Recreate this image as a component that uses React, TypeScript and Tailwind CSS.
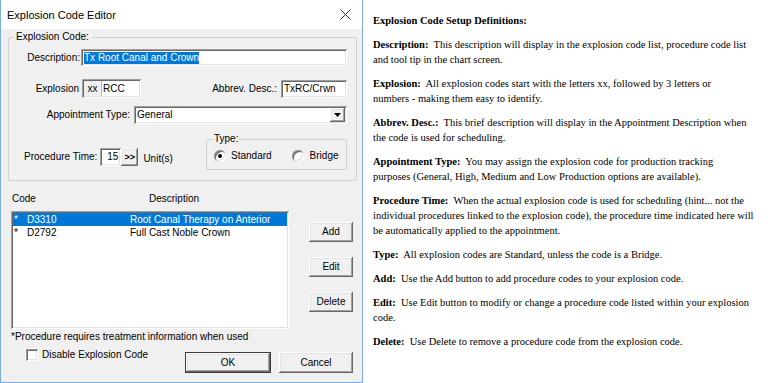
import { ReactNode } from 'react';

// classic win32 3D edges
const raised =
  'bg-[#f0f0f0] shadow-[inset_-1px_-1px_0_#696969,inset_1px_1px_0_#ffffff,inset_-2px_-2px_0_#a0a0a0,inset_2px_2px_0_#e3e3e3]';
const sunken =
  'shadow-[inset_1px_1px_0_#a0a0a0,inset_-1px_-1px_0_#ffffff,inset_2px_2px_0_#696969,inset_-2px_-2px_0_#e3e3e3]';

const Button = ({ children, className = '' }: { children: ReactNode; className?: string }) => (
  <div className={`${raised} flex items-center justify-center ${className}`}>{children}</div>
);

const Radio = ({ on = false }: { on?: boolean }) => (
  <span className={`${sunken} w-[12px] h-[12px] rounded-full bg-white flex items-center justify-center`}>
    {on && <span className="w-[4px] h-[4px] rounded-full bg-black" />}
  </span>
);

const rows = [
  { code: 'D3310', desc: 'Root Canal Therapy on Anterior', selected: true },
  { code: 'D2792', desc: 'Full Cast Noble Crown', selected: false },
];

function Dialog() {
  return (
    <div className="w-[363px] h-[383px] shrink-0 flex flex-col border border-t-0 border-[#7aaee0] font-['Liberation_Sans',Arial,sans-serif] text-[10px] leading-[12px] text-black">
      {/* title bar */}
      <div className="h-[29px] bg-white flex items-center justify-between pl-[6px] pr-[11px] text-[11px]">
        <span>Explosion Code Editor</span>
        <svg width="11" height="11" viewBox="0 0 11 11">
          <path d="M0.5 0.5 L10.5 10.5 M10.5 0.5 L0.5 10.5" stroke="#333" strokeWidth="1" />
        </svg>
      </div>

      <div className="flex-1 bg-[#f0f0f0] pl-[7px] pr-[5px] flex flex-col">
        {/* Explosion Code group */}
        <div className="relative mt-[8px] h-[144px] border border-[#d0d0d0] rounded-[2px] pt-[11px] pr-[9px] flex flex-col">
          <span className="absolute -top-[7px] left-[5px] bg-[#f0f0f0] px-[2px]">Explosion Code:</span>

          <div className="flex items-center h-[17px]">
            <span className="w-[72px] pr-[1px] text-right">Description:</span>
            <div className={`${sunken} w-[266px] h-[17px] bg-white flex items-center px-[3px]`}>
              <span className="bg-[#0078d7] text-white">Tx Root Canal and Crown</span>
            </div>
          </div>

          <div className="mt-[13px] flex items-center h-[19px]">
            <span className="w-[70px] text-right">Explosion</span>
            <div className={`${sunken} ml-[3px] w-[59px] h-[19px] flex p-[2px]`}>
              <span className="w-[17px] flex items-center justify-center">xx</span>
              <div className="flex-1 bg-white border-l border-[#b5b5b5] flex items-center pl-[1px]">RCC</div>
            </div>
            <span className="ml-auto mr-[4px]">Abbrev. Desc.:</span>
            <div className={`${sunken} w-[66px] h-[18px] bg-white flex items-center pl-[3px]`}>TxRC/Crwn</div>
          </div>

          <div className="mt-[8px] flex items-center h-[18px]">
            <span className="w-[121px] text-right">Appointment Type:</span>
            <div className={`${sunken} ml-[4px] w-[213px] h-[18px] bg-white flex items-center pl-[3px] pr-[2px]`}>
              <span className="flex-1">General</span>
              <Button className="w-[15px] h-[14px]">
                <svg width="7" height="4" viewBox="0 0 7 4">
                  <path d="M0 0 H7 L3.5 4 Z" fill="#000" />
                </svg>
              </Button>
            </div>
          </div>

          <div className="mt-[15px] flex items-start">
            <div className="mt-[9px] ml-[15px] flex items-center h-[18px]">
              <span>Procedure Time:</span>
              <div className={`${sunken} ml-[3px] w-[21px] h-[18px] bg-white flex items-center justify-end pr-[3px]`}>15</div>
              <Button className="w-[17px] h-[18px] text-[9px] font-bold">&gt;&gt;</Button>
              <span className="ml-[5px] mt-[3px]">Unit(s)</span>
            </div>

            <div className="relative ml-auto w-[141px] h-[31px] border border-[#d0d0d0] rounded-[2px] flex items-center pt-[3px]">
              <span className="absolute -top-[7px] left-[6px] bg-[#f0f0f0] px-[1px]">Type:</span>
              <span className="ml-[7px]"><Radio on /></span>
              <span className="ml-[5px]">Standard</span>
              <span className="ml-[20px]"><Radio /></span>
              <span className="ml-[6px]">Bridge</span>
            </div>
          </div>
        </div>

        {/* procedure list + buttons */}
        <div className="mt-[12px] flex">
          <div className="ml-[3px] w-[278px] flex flex-col">
            <div className="flex h-[12px]">
              <span className="w-[138px] pl-[1px]">Code</span>
              <span>Description</span>
            </div>
            <div className={`${sunken} mt-[6px] h-[118px] bg-white p-[2px] flex flex-col`}>
              {rows.map((r) => (
                <div
                  key={r.code}
                  className={`flex items-center h-[13px] ${r.selected ? 'bg-[#0078d7] text-white' : ''}`}
                >
                  <span className="w-[14px] pl-[1px]">*</span>
                  <span className="w-[103px]">{r.code}</span>
                  <span>{r.desc}</span>
                </div>
              ))}
            </div>
            <span className="mt-[2px]">*Procedure requires treatment information when used</span>
          </div>

          <div className="ml-auto mr-[4px] mt-[29px] flex flex-col gap-[15px]">
            <Button className="w-[44px] h-[20px]">Add</Button>
            <Button className="w-[44px] h-[20px]">Edit</Button>
            <Button className="w-[44px] h-[20px]">Delete</Button>
          </div>
        </div>

        {/* bottom row */}
        <div className="mt-[6px] flex items-start">
          <div className="ml-[18px] flex items-center">
            <span className={`${sunken} w-[12px] h-[12px] bg-white`} />
            <span className="ml-[4px]">Disable Explosion Code</span>
          </div>
          <div className="ml-auto mr-[4px] mt-[3px] flex gap-[8px]">
            <Button className="w-[86px] h-[21px] border border-[#3c3c3c]">OK</Button>
            <Button className="w-[74px] h-[21px]">Cancel</Button>
          </div>
        </div>
      </div>
    </div>
  );
}

// line breaks follow the source document
const defs: { term: string; lines: string[] }[] = [
  { term: 'Description:', lines: ['This description will display in the explosion code list, procedure code list', 'and tool tip in the chart screen.'] },
  { term: 'Explosion:', lines: ['All explosion codes start with the letters xx, followed by 3 letters or', 'numbers - making them easy to identify.'] },
  { term: 'Abbrev. Desc.:', lines: ['This brief description will display in the Appointment Description when', 'the code is used for scheduling.'] },
  { term: 'Appointment Type:', lines: ['You may assign the explosion code for production tracking', 'purposes (General, High, Medium and Low Production options are available).'] },
  {
    term: 'Procedure Time:',
    lines: [
      'When the actual explosion code is used for scheduling (hint... not the',
      'individual procedures linked to the explosion code), the procedure time indicated here will',
      'be automatically applied to the appointment.',
    ],
  },
  { term: 'Type:', lines: ['All explosion codes are Standard, unless the code is a Bridge.'] },
  { term: 'Add:', lines: ['Use the Add button to add procedure codes to your explosion code.'] },
  { term: 'Edit:', lines: ['Use Edit button to modify or change a procedure code listed within your explosion', 'code.'] },
  { term: 'Delete:', lines: ['Use Delete to remove a procedure code from the explosion code.'] },
];

function Definitions() {
  return (
    <div className="pl-[10px] pt-[13px] flex-1 font-['Liberation_Serif','Times_New_Roman',serif] text-[10.5px] leading-[15px] text-black whitespace-nowrap">
      <p className="font-bold">Explosion Code Setup Definitions:</p>
      {defs.map((d) => (
        <p key={d.term} className="mt-[9px]">
          {d.lines.map((line, i) => (
            <span key={i} className="block">
              {i === 0 && (
                <>
                  <b>{d.term}</b>&nbsp;{' '}
                </>
              )}
              {line}
            </span>
          ))}
        </p>
      ))}
    </div>
  );
}

export default function App() {
  return (
    <div className="flex w-[768px] h-[383px] bg-white overflow-hidden">
      <Dialog />
      <Definitions />
    </div>
  );
}
